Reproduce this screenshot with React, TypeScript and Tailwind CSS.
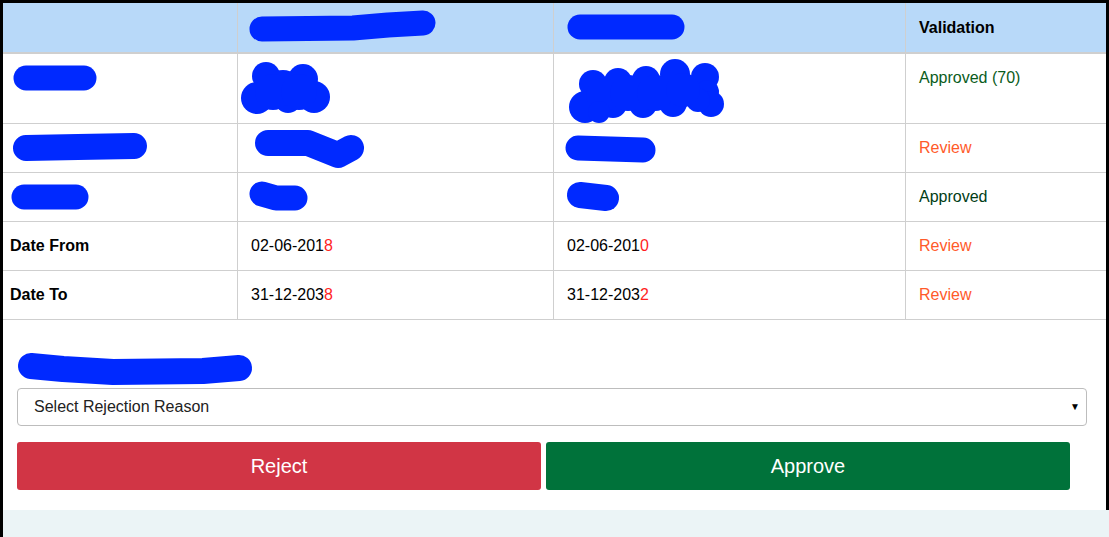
import * as React from "react";

type Row = {
  label: React.ReactNode;
  a: React.ReactNode;
  b: React.ReactNode;
  status: "approved" | "approvedDark" | "review";
  statusText: string;
  tall?: boolean;
};

const Red = ({ children }: { children: React.ReactNode }) => <span className="text-[#ff1f1f]">{children}</span>;

const rows: Row[] = [
  { label: "", a: "", b: "", status: "approved", statusText: "Approved (70)", tall: true },
  { label: "", a: "", b: "", status: "review", statusText: "Review" },
  { label: "", a: "", b: "", status: "approvedDark", statusText: "Approved" },
  {
    label: <span className="font-bold">Date From</span>,
    a: <>02-06-201<Red>8</Red></>,
    b: <>02-06-201<Red>0</Red></>,
    status: "review",
    statusText: "Review",
  },
  {
    label: <span className="font-bold">Date To</span>,
    a: <>31-12-203<Red>8</Red></>,
    b: <>31-12-203<Red>2</Red></>,
    status: "review",
    statusText: "Review",
  },
];

const statusClass = {
  approved: "text-[#0a5c1c]",
  approvedDark: "text-[#013d16]",
  review: "text-[#ff5a2a]",
};

// redaction scribbles drawn over the screenshot
function Scribbles() {
  const blue = "#0029ff";
  const line = (d: string, w = 25) => (
    <path d={d} stroke={blue} strokeWidth={w} strokeLinecap="round" strokeLinejoin="round" fill="none" />
  );
  const dots = (c: [number, number, number][]) => c.map(([x, y, r], i) => <circle key={i} cx={x} cy={y} r={r} fill={blue} />);
  return (
    <svg className="pointer-events-none absolute inset-0" width="1109" height="537" viewBox="0 0 1109 537">
      {line("M259 29 L350 28 L385 25 L420 23", 25)}
      {line("M577 27 L669 27", 25)}
      {line("M23 78 L81 78", 25)}
      {dots([
        [263, 76, 14],
        [300, 79, 15],
        [254, 98, 16],
        [285, 100, 13],
        [311, 97, 16],
        [280, 88, 18],
        [270, 92, 18],
        [296, 92, 18],
      ])}
      {dots([
        [590, 84, 14],
        [615, 82, 14],
        [643, 80, 14],
        [672, 74, 15],
        [702, 77, 14],
        [704, 92, 12],
        [708, 104, 13],
        [582, 107, 16],
        [610, 104, 14],
        [640, 104, 14],
        [670, 103, 14],
        [695, 100, 12],
        [600, 95, 17],
        [625, 93, 18],
        [652, 93, 18],
        [680, 90, 17],
        [596, 112, 11],
      ])}
      {line("M23 148 L75 147 L131 146", 26)}
      {line("M265 143 L305 143 L335 155 L348 148", 26)}
      {line("M21 197 L73 197", 25)}
      {line("M259 194 L273 198 L292 198", 25)}
      {line("M575 148 L640 150", 25)}
      {line("M577 195 L603 198", 26)}
      {line("M28 366 L60 369 L110 372 L200 371 L236 368", 26)}
    </svg>
  );
}

export default function App() {
  return (
    <div className="relative flex h-[537px] w-[1109px] flex-col border-l-[3px] border-black bg-white font-['Liberation_Sans',Arial,sans-serif] text-[16px] text-black">
      <div className="flex flex-col border-t-[3px] border-r-[3px] border-black">
        <div className="grid h-[51px] grid-cols-[235px_316px_352px_200px] border-b-2 border-[#cfcfcf] bg-[#b8d9f9]">
          <div className="border-r border-[#cfcfcf]" />
          <div className="border-r border-[#cfcfcf]" />
          <div className="border-r border-[#cfcfcf]" />
          <div className="flex items-center pl-[13px] font-bold">Validation</div>
        </div>
        {rows.map((r, i) => (
          <div
            key={i}
            className={`grid grid-cols-[235px_316px_352px_200px] border-b border-[#cfcfcf] leading-6 ${r.tall ? "h-[70px]" : "h-[49px]"}`}
          >
            <div className="border-r border-[#cfcfcf] pl-[7px] pt-[12px]">{r.label}</div>
            <div className="border-r border-[#cfcfcf] pl-[13px] pt-[12px]">{r.a}</div>
            <div className="border-r border-[#cfcfcf] pl-[13px] pt-[12px]">{r.b}</div>
            <div className={`pl-[13px] pt-[12px] ${statusClass[r.status]}`}>{r.statusText}</div>
          </div>
        ))}
        <div className="flex flex-col px-[14px] pt-[38px] pb-[20px]">
          <div className="h-[30px]" />
          <div className="flex h-[38px] w-[1070px] items-center rounded-[4px] border border-[#bdbdbd] bg-white pr-[6px]">
            <select className="h-full flex-1 appearance-none bg-transparent pl-[16px] text-[16px] text-[#222] outline-none">
              <option>Select Rejection Reason</option>
            </select>
            <span className="text-[10px] leading-none">▼</span>
          </div>
          <div className="mt-[16px] flex gap-[5px]">
            <button className="h-[48px] w-[524px] rounded-[3px] bg-[#d13545] text-[20px] text-white">Reject</button>
            <button className="h-[48px] w-[524px] rounded-[3px] bg-[#00723a] text-[20px] text-white">Approve</button>
          </div>
        </div>
      </div>
      <div className="flex-1 bg-[#ebf4f6]" />
      <Scribbles />
    </div>
  );
}
